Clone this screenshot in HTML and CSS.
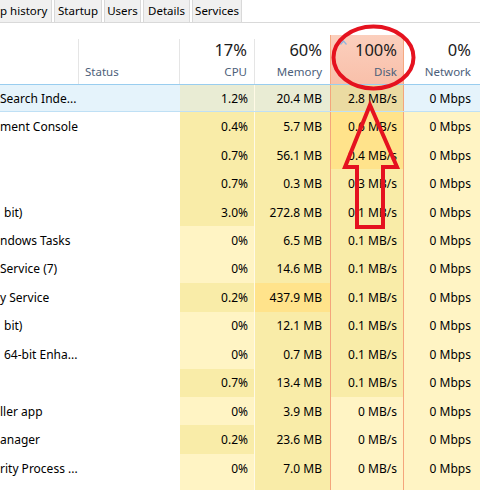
FILE: index.html
```html
<!DOCTYPE html>
<html>
<head>
<meta charset="utf-8">
<link rel="stylesheet" href="styles.css">
</head>
<body>
<div class="page">
  <div class="tabs">
    <div class="tab tab-first">p history</div>
    <div class="tab w-startup">Startup</div>
    <div class="tab w-users">Users</div>
    <div class="tab w-details">Details</div>
    <div class="tab w-services">Services</div>
  </div>

  <div class="header">
    <div class="hcell hname"></div>
    <div class="hcell hstatus"><span class="hbig">&nbsp;</span><span class="hlabel">Status</span></div>
    <div class="hcell hcpu"><span class="hbig">17%</span><span class="hlabel">CPU</span></div>
    <div class="hcell hmem"><span class="hbig">60%</span><span class="hlabel">Memory</span></div>
    <div class="hcell hdisk">
      <svg class="sort" width="7" height="5" viewBox="0 0 7 5"><path d="M0.5 4.5 L3.5 1 L6.5 4.5" fill="none" stroke="#8fb4df" stroke-width="1.2"/></svg>
      <span class="hbig">100%</span><span class="hlabel">Disk</span>
    </div>
    <div class="hcell hnet"><span class="hbig">0%</span><span class="hlabel">Network</span></div>
  </div>

  <div class="rows">
    <div class="row sel">
      <div class="c name">Search Inde...</div><div class="c status"></div>
      <div class="c cpu hs">1.2%</div><div class="c mem hs">20.4 MB</div><div class="c disk hsd">2.8 MB/s</div><div class="c net">0 Mbps</div>
    </div>
    <div class="row">
      <div class="c name">ment Console</div><div class="c status"></div>
      <div class="c cpu h1">0.4%</div><div class="c mem h1">5.7 MB</div><div class="c disk h2">0.6 MB/s</div><div class="c net h0">0 Mbps</div>
    </div>
    <div class="row">
      <div class="c name"></div><div class="c status"></div>
      <div class="c cpu h1">0.7%</div><div class="c mem h1">56.1 MB</div><div class="c disk h2">0.4 MB/s</div><div class="c net h0">0 Mbps</div>
    </div>
    <div class="row">
      <div class="c name"></div><div class="c status"></div>
      <div class="c cpu h1">0.7%</div><div class="c mem h1">0.3 MB</div><div class="c disk h1">0.3 MB/s</div><div class="c net h0">0 Mbps</div>
    </div>
    <div class="row">
      <div class="c name ind-s">bit)</div><div class="c status"></div>
      <div class="c cpu h1">3.0%</div><div class="c mem h1">272.8 MB</div><div class="c disk h1">0.1 MB/s</div><div class="c net h0">0 Mbps</div>
    </div>
    <div class="row">
      <div class="c name">ndows Tasks</div><div class="c status"></div>
      <div class="c cpu h0">0%</div><div class="c mem h1">6.5 MB</div><div class="c disk h1">0.1 MB/s</div><div class="c net h0">0 Mbps</div>
    </div>
    <div class="row">
      <div class="c name">Service (7)</div><div class="c status"></div>
      <div class="c cpu h0">0%</div><div class="c mem h1">14.6 MB</div><div class="c disk h1">0.1 MB/s</div><div class="c net h0">0 Mbps</div>
    </div>
    <div class="row">
      <div class="c name">y Service</div><div class="c status"></div>
      <div class="c cpu h1">0.2%</div><div class="c mem h2">437.9 MB</div><div class="c disk h1">0.1 MB/s</div><div class="c net h0">0 Mbps</div>
    </div>
    <div class="row">
      <div class="c name ind-s">bit)</div><div class="c status"></div>
      <div class="c cpu h0">0%</div><div class="c mem h1">12.1 MB</div><div class="c disk h1">0.1 MB/s</div><div class="c net h0">0 Mbps</div>
    </div>
    <div class="row">
      <div class="c name ind-s">64-bit Enha...</div><div class="c status"></div>
      <div class="c cpu h0">0%</div><div class="c mem h1">0.7 MB</div><div class="c disk h1">0.1 MB/s</div><div class="c net h0">0 Mbps</div>
    </div>
    <div class="row">
      <div class="c name"></div><div class="c status"></div>
      <div class="c cpu h1">0.7%</div><div class="c mem h1">13.4 MB</div><div class="c disk h1">0.1 MB/s</div><div class="c net h0">0 Mbps</div>
    </div>
    <div class="row">
      <div class="c name">ller app</div><div class="c status"></div>
      <div class="c cpu h0">0%</div><div class="c mem h1">3.9 MB</div><div class="c disk h0">0 MB/s</div><div class="c net h0">0 Mbps</div>
    </div>
    <div class="row">
      <div class="c name">anager</div><div class="c status"></div>
      <div class="c cpu h1">0.2%</div><div class="c mem h1">23.6 MB</div><div class="c disk h0">0 MB/s</div><div class="c net h0">0 Mbps</div>
    </div>
    <div class="row">
      <div class="c name">rity Process ...</div><div class="c status"></div>
      <div class="c cpu h0">0%</div><div class="c mem h1">7.0 MB</div><div class="c disk h0">0 MB/s</div><div class="c net h0">0 Mbps</div>
    </div>
    <div class="row">
      <div class="c name"></div><div class="c status"></div>
      <div class="c cpu h0"></div><div class="c mem h1"></div><div class="c disk h0"></div><div class="c net h0"></div>
    </div>
  </div>

  <svg class="annot" width="480" height="490" viewBox="0 0 480 490">
    <ellipse cx="373.5" cy="57.5" rx="40" ry="31" fill="none" stroke="#e5121f" stroke-width="4"/>
    <polygon points="370,105 397,167 383,167 383,227 357,227 357,167 345,167" fill="none" stroke="#e5121f" stroke-width="4" stroke-linejoin="miter"/>
  </svg>
</div>
</body>
</html>
```

FILE: styles.css
```css
html, body {
  margin: 0;
  padding: 0;
  background: #ffffff;
}

.page {
  position: relative;
  width: 480px;
  height: 490px;
  overflow: hidden;
  font-family: "Noto Sans", "Open Sans", sans-serif;
  color: #000;
}

/* Tabs */
.tabs {
  display: flex;
  gap: 2px;
  height: 22px;
  border-bottom: 1px solid #d9d9d9;
}

.tab {
  box-sizing: border-box;
  height: 22px;
  background: #f0f0f0;
  border: 1px solid #d9d9d9;
  border-top: none;
  border-bottom: none;
  font-size: 11.5px;
  line-height: 22px;
  text-align: center;
  white-space: nowrap;
  overflow: hidden;
}

.tab-first {
  width: 52px;
  border-left: none;
  text-align: left;
}
.w-startup { width: 48px; }
.w-users { width: 37px; }
.w-details { width: 47px; }
.w-services { width: 50px; }

/* Header */
.header {
  display: grid;
  grid-template-columns: 79px 101px 75px 75px 74px 76px;
  height: 46px;
  margin-top: 15px;
}

.hcell {
  box-sizing: border-box;
  display: flex;
  flex-direction: column;
  align-items: flex-end;
  padding-right: 7px;
  position: relative;
}

.hname { border-right: 1px solid #e5e5e5; margin-top: 1px; }
.hstatus { border-right: 1px solid #e5e5e5; align-items: flex-start; padding-left: 6px; margin-top: 1px; }
.hcpu { border-right: 1px solid #e5e5e5; margin-top: 1px; }
.hmem { padding-right: 8px; margin-top: 1px; }
.hdisk {
  margin-top: -3px;
  padding-top: 4px;
  background: linear-gradient(#fbcfbd, #f9c0aa);
  border-left: 1px solid #f5a882;
  border-right: 1px solid #f5a882;
  padding-right: 6px;
}
.hnet { padding-right: 9px; margin-top: 1px; }

.hbig {
  font-size: 16.5px;
  line-height: 22px;
  color: #1b1b1b;
}

.hlabel {
  font-size: 11.5px;
  line-height: 16px;
  margin-top: 3px;
  color: #4c607a;
}

.sort {
  position: absolute;
  left: 9px;
  top: 5px;
}

/* Rows */
.row {
  box-sizing: border-box;
  display: grid;
  grid-template-columns: 79px 101px 75px 75px 74px 76px;
  height: 28.46px;
}

.c {
  box-sizing: border-box;
  display: flex;
  align-items: center;
  justify-content: flex-end;
  font-size: 12px;
  white-space: nowrap;
  overflow: hidden;
}

.name {
  justify-content: flex-start;
  padding-left: 0;
}
.ind-s { padding-left: 4px; }

.cpu {
  padding-right: 6px;
  border-right: 1px solid #fffae6;
}
.mem { padding-right: 8px; }
.disk {
  padding-right: 6px;
  border-left: 1px solid #f4a57c;
  border-right: 1px solid #f4a57c;
}
.net { padding-right: 9px; }

.h0 { background: #fff4c4; }
.h1 { background: #f9eca8; }
.h2 { background: #ffe38b; }

.sel {
  background: #e5f3fb;
  border-top: 1px solid #99cdef;
  border-bottom: 1px solid #bfe0f5;
}
.sel .net { background: #e5f3fb; }
.hs { background: #e9ecd4; }
.hsd { background: #ebdba2; }

.annot {
  position: absolute;
  left: 0;
  top: 0;
  pointer-events: none;
}
```
